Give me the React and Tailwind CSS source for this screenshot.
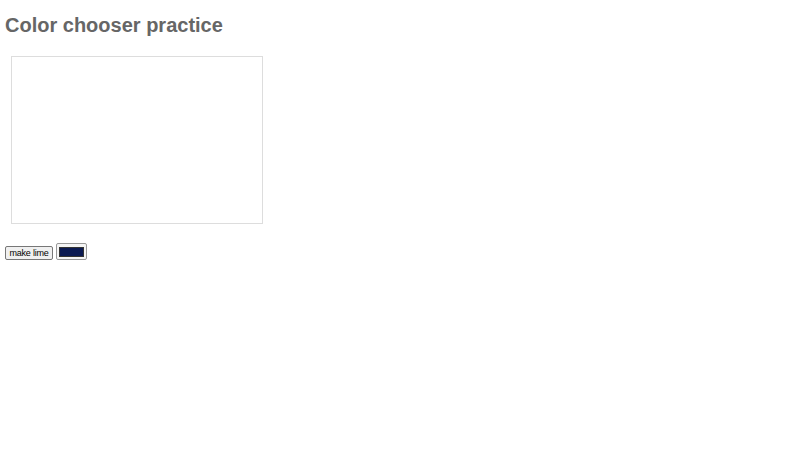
import React from "react";

export default function App() {
  return (
    <div className="min-h-[450px] bg-white px-[5px] pt-[13px]" style={{ fontFamily: '"Liberation Sans", Arial, sans-serif' }}>
      <h1 className="text-[20px] leading-[24px] font-bold text-[#666666]">Color chooser practice</h1>
      <div className="ml-[6px] mt-[19px] h-[168px] w-[252px] border border-[#dddddd] bg-white" />
      <div className="mt-[19px] flex items-end gap-[3px]">
        <button className="h-[14px] w-[48px] rounded-[2px] border border-[#777777] bg-[#f0f0f0] p-0 text-center text-[9px] leading-[12px] tracking-[-0.2px] text-black">
          make lime
        </button>
        <div className="flex h-[17px] w-[31px] items-center justify-center rounded-[2px] border border-[#999999] bg-[#f5f5f5]">
          <div className="h-[10px] w-[25px] border border-[#333333] bg-[#0b1a52]" />
        </div>
      </div>
    </div>
  );
}
